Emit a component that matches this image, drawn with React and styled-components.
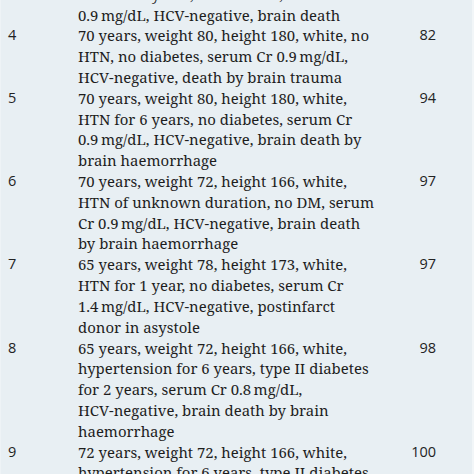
import React from "react";
import styled, { createGlobalStyle } from "styled-components";

const Global = createGlobalStyle`
  html, body { margin: 0; padding: 0; background: #e8eff3; }
  body { width: 474px; height: 474px; overflow: hidden; }
`;

const Table = styled.div`
  width: 474px;
  height: 474px;
  overflow: hidden;
  background: #e8eff3;
  color: #1e1e1e;
  box-sizing: border-box;
  border-left: 1px solid #eef3f6;
  border-right: 2px solid #f2f6f8;
`;

const Body = styled.div`
  margin-top: -16.3px;
  display: flex;
  flex-direction: column;
`;

const Row = styled.div`
  display: grid;
  grid-template-columns: 70px 300px 58px;
  padding-left: 7px;
  line-height: 20.82px;
`;

const Num = styled.div`
  font-family: "Open Sans", "Noto Sans", sans-serif;
  font-size: 14.5px;
  color: #232323;
`;

const Desc = styled.div`
  font-family: "Noto Serif", "DejaVu Serif", serif;
  font-size: 14.93px;
  white-space: nowrap;
`;

const Line = styled.span`
  display: block;
`;

const Score = styled(Num)`
  text-align: right;
`;

const rows = [
  { n: "", lines: ["HTN for 6 years, no diabetes, serum Cr", "0.9\u2009mg/dL, HCV-negative, brain death"], s: "" },
  { n: "4", lines: ["70 years, weight 80, height 180, white, no", "HTN, no diabetes, serum Cr 0.9\u2009mg/dL,", "HCV-negative, death by brain trauma"], s: "82" },
  { n: "5", lines: ["70 years, weight 80, height 180, white,", "HTN for 6 years, no diabetes, serum Cr", "0.9\u2009mg/dL, HCV-negative, brain death by", "brain haemorrhage"], s: "94" },
  { n: "6", lines: ["70 years, weight 72, height 166, white,", "HTN of unknown duration, no DM, serum", "Cr 0.9\u2009mg/dL, HCV-negative, brain death", "by brain haemorrhage"], s: "97" },
  { n: "7", lines: ["65 years, weight 78, height 173, white,", "HTN for 1 year, no diabetes, serum Cr", "1.4\u2009mg/dL, HCV-negative, postinfarct", "donor in asystole"], s: "97" },
  { n: "8", lines: ["65 years, weight 72, height 166, white,", "hypertension for 6 years, type II diabetes", "for 2 years, serum Cr 0.8\u2009mg/dL,", "HCV-negative, brain death by brain", "haemorrhage"], s: "98" },
  { n: "9", lines: ["72 years, weight 72, height 166, white,", "hypertension for 6 years, type II diabetes"], s: "100" },
];

export default function App() {
  return (
    <>
      <Global />
      <Table>
        <Body>
          {rows.map((r, i) => (
            <Row key={i}>
              <Num>{r.n}</Num>
              <Desc>
                {r.lines.map((l, j) => (
                  <Line key={j}>{l}</Line>
                ))}
              </Desc>
              <Score>{r.s}</Score>
            </Row>
          ))}
        </Body>
      </Table>
    </>
  );
}
